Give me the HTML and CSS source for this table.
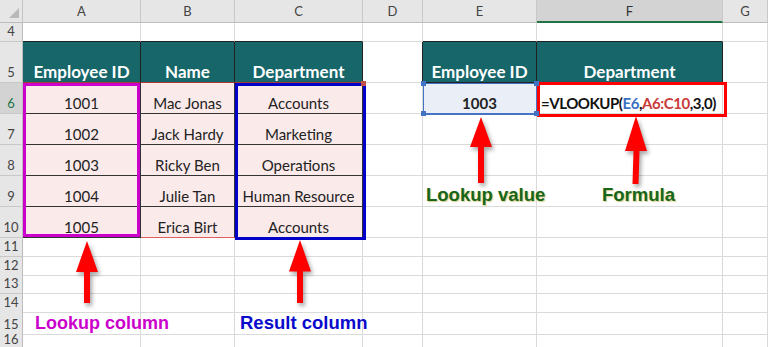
FILE: index.html
```html
<!DOCTYPE html>
<html lang="en">
  <head>
    <meta charset="UTF-8" />
    <meta name="viewport" content="width=device-width, initial-scale=1.0" />
    <title>VLOOKUP - Lookup value and result column</title>
    <link rel="stylesheet" href="styles.css">
  </head>
  <body>
    <div class="sheet">
      <div class="row head">
        <div class="corner"><span class="tri"></span></div>
        <div class="col">A</div>
        <div class="col">B</div>
        <div class="col">C</div>
        <div class="col">D</div>
        <div class="col">E</div>
        <div class="col on">F</div>
        <div class="col">G</div>
      </div>

      <div class="row r4">
        <div class="rh">4</div>
        <div class="c above"></div>
        <div class="c above"></div>
        <div class="c above"></div>
        <div class="c"></div>
        <div class="c above"></div>
        <div class="c above"></div>
        <div class="c"></div>
      </div>

      <div class="row r5">
        <div class="rh">5</div>
        <div class="c th range-top">Employee ID</div>
        <div class="c th range-top">Name</div>
        <div class="c th range-top">Department</div>
        <div class="c edge"></div>
        <div class="c th">Employee ID</div>
        <div class="c th">Department</div>
        <div class="c"></div>
      </div>

      <div class="row">
        <div class="rh on">6</div>
        <div class="c td">1001</div>
        <div class="c td">Mac Jonas</div>
        <div class="c td">Accounts</div>
        <div class="c"></div>
        <div class="c picked"><b>1003</b></div>
        <div class="c formula">
          <b>=VLOOKUP(<span class="ref-e">E6</span>,<span class="ref-a">A6:C10</span>,3,0)</b>
        </div>
        <div class="c"></div>
      </div>

      <div class="row">
        <div class="rh">7</div>
        <div class="c td">1002</div>
        <div class="c td">Jack Hardy</div>
        <div class="c td">Marketing</div>
        <div class="c"></div>
        <div class="c"></div>
        <div class="c"></div>
        <div class="c"></div>
      </div>

      <div class="row">
        <div class="rh">8</div>
        <div class="c td">1003</div>
        <div class="c td">Ricky Ben</div>
        <div class="c td">Operations</div>
        <div class="c"></div>
        <div class="c"></div>
        <div class="c"></div>
        <div class="c"></div>
      </div>

      <div class="row">
        <div class="rh">9</div>
        <div class="c td">1004</div>
        <div class="c td">Julie Tan</div>
        <div class="c td">Human Resource</div>
        <div class="c"></div>
        <div class="c note note-value">Lookup value</div>
        <div class="c note note-formula">Formula</div>
        <div class="c"></div>
      </div>

      <div class="row">
        <div class="rh">10</div>
        <div class="c td">1005</div>
        <div class="c td range-bottom">Erica Birt</div>
        <div class="c td">Accounts</div>
        <div class="c"></div>
        <div class="c"></div>
        <div class="c"></div>
        <div class="c"></div>
      </div>

      <div class="row sm">
        <div class="rh">11</div>
        <div class="c"></div><div class="c"></div><div class="c"></div><div class="c"></div>
        <div class="c"></div><div class="c"></div><div class="c"></div>
      </div>
      <div class="row xs">
        <div class="rh">12</div>
        <div class="c"></div><div class="c"></div><div class="c"></div><div class="c"></div>
        <div class="c"></div><div class="c"></div><div class="c"></div>
      </div>
      <div class="row sm">
        <div class="rh">13</div>
        <div class="c"></div><div class="c"></div><div class="c"></div><div class="c"></div>
        <div class="c"></div><div class="c"></div><div class="c"></div>
      </div>
      <div class="row xs">
        <div class="rh">14</div>
        <div class="c"></div><div class="c"></div><div class="c"></div><div class="c"></div>
        <div class="c"></div><div class="c"></div><div class="c"></div>
      </div>
      <div class="row sm">
        <div class="rh">15</div>
        <div class="c note note-lookup">Lookup column</div>
        <div class="c"></div>
        <div class="c note note-result">Result column</div>
        <div class="c"></div>
        <div class="c"></div><div class="c"></div><div class="c"></div>
      </div>
      <div class="row sm">
        <div class="rh">16</div>
        <div class="c"></div><div class="c"></div><div class="c"></div><div class="c"></div>
        <div class="c"></div><div class="c"></div><div class="c"></div>
      </div>

      <!-- highlight boxes drawn over the grid -->
      <div class="box box-lookup"></div>
      <div class="box box-result"></div>
      <div class="box box-formula"></div>
      <div class="box box-select">
        <span class="handle tl"></span>
        <span class="handle tr"></span>
        <span class="handle bl"></span>
        <span class="handle br"></span>
      </div>
      <span class="corner-mark"></span>

      <!-- arrows -->
      <svg class="arrow arrow-lookup" viewBox="0 0 22 64" preserveAspectRatio="none">
        <polygon points="11,0 22,32 14,32 14,64 8,64 8,32 0,32" />
      </svg>
      <svg class="arrow arrow-result" viewBox="0 0 22 64" preserveAspectRatio="none">
        <polygon points="11,0 22,32 14,32 14,64 8,64 8,32 0,32" />
      </svg>
      <svg class="arrow arrow-value" viewBox="0 0 22 64" preserveAspectRatio="none">
        <polygon points="11,0 22,29 14,29 14,64 8,64 8,29 0,29" />
      </svg>
      <svg class="arrow arrow-formula" viewBox="0 0 22 64" preserveAspectRatio="none">
        <polygon points="11,0 22,33 14.5,33 13.5,64 7.5,64 8.5,33 0,33" />
      </svg>
    </div>
  </body>
</html>
```

FILE: styles.css
```css
* {
  margin: 0;
  padding: 0;
  box-sizing: border-box;
}
body {
  width: 768px;
  height: 347px;
  overflow: hidden;
  background: #fff;
  font-family: Lato, "Open Sans", sans-serif;
}
.sheet {
  position: relative;
}
.row {
  display: grid;
  grid-template-columns: 23px 118px 94px 128px 60px 114px 186px 45px;
  height: 31px;
}
.head {
  height: 23px;
}
.r4 {
  height: 19px;
}
.r5 {
  height: 41px;
}
.sm {
  height: 19px;
}
.xs {
  height: 18px;
}

/* headers */
.corner {
  background: #e6e6e6;
  border-right: 1px solid #c4c4c4;
  border-bottom: 1px solid #bdbdbd;
  display: flex;
  justify-content: flex-end;
  align-items: flex-end;
  padding: 0 3px 4px 0;
}
.tri {
  width: 10px;
  height: 10px;
  background: #b9b9b9;
  clip-path: polygon(100% 0, 100% 100%, 0 100%);
}
.col {
  background: #e6e6e6;
  border-right: 1px solid #c8c8c8;
  border-bottom: 1px solid #bdbdbd;
  display: flex;
  align-items: center;
  justify-content: center;
  font-size: 13px;
  color: #444;
}
.col.on {
  background: #d3d3d3;
  border-bottom: 2px solid #217346;
  color: #333;
}
.rh {
  background: #e6e6e6;
  border-right: 1px solid #bdbdbd;
  border-bottom: 1px solid #c8c8c8;
  display: flex;
  align-items: flex-end;
  justify-content: center;
  padding-bottom: 2px;
  font-size: 13px;
  color: #444;
}
.rh.on {
  background: #d3d3d3;
  color: #217346;
}

/* cells */
.c {
  border-right: 1px solid #dadada;
  border-bottom: 1px solid #dadada;
  display: flex;
  align-items: flex-end;
  justify-content: center;
  padding-bottom: 1px;
  font-size: 15px;
  color: #222;
  white-space: nowrap;
}
.above {
  border-bottom-color: #222;
}
.edge {
  border-right-color: #222;
}
.th {
  background: #17666a;
  color: #fff;
  font-weight: 700;
  font-size: 17px;
  border-color: #222;
  padding-bottom: 0;
}
.range-top {
  border-bottom-color: #a83a36;
}
.td {
  background: #fbeaea;
  border-color: #333;
}
.range-bottom {
  border-bottom-color: #e06060;
}
.picked {
  background: #e9eef7;
}
.formula {
  justify-content: flex-start;
  padding-left: 4px;
  color: #111;
  letter-spacing: -0.45px;
}
.ref-e {
  color: #3b6fc4;
}
.ref-a {
  color: #c93a3a;
}

/* notes */
.note {
  justify-content: flex-start;
  font-family: "Liberation Sans", Arial, sans-serif;
  font-weight: 700;
  font-size: 18px;
  padding-bottom: 0;
  overflow: visible;
}
.note-lookup {
  color: #cc00cc;
  padding-left: 12px;
}
.note-result {
  color: #0a0acc;
  padding-left: 5px;
  font-size: 18.5px;
}
.note-value,
.note-formula {
  color: #17661a;
  text-shadow: 1px 1px 1px rgba(190, 160, 40, 0.55);
  font-size: 18.5px;
}
.note-value {
  padding-left: 3px;
}
.note-formula {
  padding-left: 65px;
}

/* overlays */
.box {
  position: absolute;
}
.box-lookup {
  left: 23px;
  top: 83px;
  width: 117px;
  height: 154px;
  border: 3px solid #cc00cc;
}
.box-result {
  left: 235px;
  top: 83px;
  width: 131px;
  height: 157px;
  border: 3px solid #0000c8;
}
.box-formula {
  left: 537px;
  top: 82px;
  width: 190px;
  height: 35px;
  border: 3px solid #ff0000;
}
.box-select {
  left: 423px;
  top: 83px;
  width: 114px;
  height: 32px;
  border: 1px solid #4472c4;
  border-bottom-width: 2px;
}
.handle {
  position: absolute;
  width: 5px;
  height: 5px;
  background: #4472c4;
}
.tl {
  left: -3px;
  top: -3px;
}
.tr {
  right: -3px;
  top: -3px;
}
.bl {
  left: -3px;
  bottom: -3px;
}
.br {
  right: -3px;
  bottom: -3px;
}
.corner-mark {
  position: absolute;
  left: 361px;
  top: 81px;
  width: 5px;
  height: 5px;
  background: #c0504d;
}
.arrow {
  position: absolute;
  width: 22px;
  fill: #ff0000;
  filter: drop-shadow(2px 3px 2px rgba(0, 0, 0, 0.35));
}
.arrow-lookup {
  left: 76px;
  top: 241px;
  height: 62px;
}
.arrow-result {
  left: 289px;
  top: 240px;
  height: 63px;
}
.arrow-value {
  left: 470px;
  top: 117px;
  height: 66px;
}
.arrow-formula {
  left: 625px;
  top: 116px;
  height: 68px;
}
```
